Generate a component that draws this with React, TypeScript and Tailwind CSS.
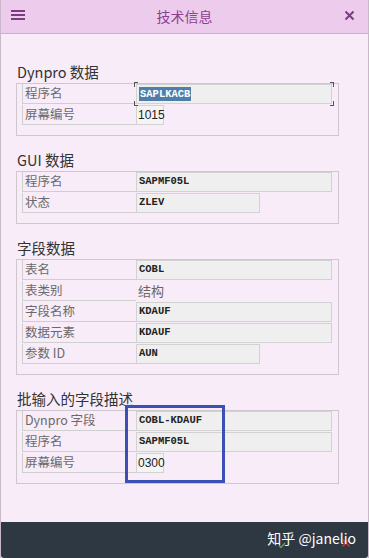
import React from "react";

const cjk = { fontFamily: '"Noto Sans CJK SC", "Noto Sans", sans-serif' };
const mono = { fontFamily: '"Liberation Mono", "DejaVu Sans Mono", monospace' };
const sans = { fontFamily: '"Liberation Sans", Arial, sans-serif' };

type Row = {
  label: string;
  value: string;
  kind: "wide" | "mid" | "small" | "text" | "selected";
};

function Field({ row }: { row: Row }) {
  if (row.kind === "text") {
    return (
      <div className="flex h-full items-center pl-[2px] text-[13px] text-[#666]" style={cjk}>
        {row.value}
      </div>
    );
  }
  if (row.kind === "small") {
    return (
      <div
        className="flex h-full w-[28px] items-center border border-[#d2d2d2] bg-[#f4f4f4] pl-[1px] text-[12px] text-[#222]"
        style={sans}
      >
        {row.value}
      </div>
    );
  }
  const w = row.kind === "mid" ? "w-[124px]" : "w-[196px]";
  return (
    <div
      className={`relative flex h-full ${w} items-center border border-[#d2d2d2] bg-[#efefef] pl-[2px] text-[10.5px] font-bold text-[#222]`}
      style={mono}
    >
      {row.kind === "selected" ? (
        <>
          <span className="bg-[#4d7faa] px-[1px] leading-[14px] text-white">{row.value}</span>
          <span className="absolute -left-[3px] -top-[3px] h-[5px] w-[4px] border-l border-t border-[#555]" />
          <span className="absolute -right-[3px] -top-[3px] h-[5px] w-[4px] border-r border-t border-[#555]" />
          <span className="absolute -bottom-[3px] -left-[3px] h-[5px] w-[4px] border-b border-l border-[#555]" />
          <span className="absolute -bottom-[3px] -right-[3px] h-[5px] w-[4px] border-b border-r border-[#555]" />
        </>
      ) : (
        row.value
      )}
    </div>
  );
}

function Section({ title, rows, first }: { title: string; rows: Row[]; first?: boolean }) {
  return (
    <div className={first ? "" : "mt-[14px]"}>
      <div className="mb-[1px] h-5 pl-[1px] text-[14.5px] leading-5 text-[#333]" style={cjk}>
        {title}
      </div>
      <div className="flex flex-col gap-[1px] border border-[#cfc7cf] pb-[10px] pl-[5px] pr-[6px] pt-0">
        {rows.map((r, i) => (
          <div key={i} className="flex h-5">
            <div
              className="flex w-[114px] shrink-0 items-center border-b border-l border-[#cfcfcf] pl-[2px] text-[12.5px] text-[#6a6a6a]"
              style={cjk}
            >
              {r.label}
            </div>
            <Field row={r} />
          </div>
        ))}
      </div>
    </div>
  );
}

export default function App() {
  return (
    <div className="relative flex h-[558px] w-[369px] flex-col overflow-hidden border-x border-[#c8b8c8] bg-[#f8ecf8]">
      {/* Header */}
      <div className="flex h-[34px] shrink-0 items-center justify-between border-b border-[#cfaed0] bg-[#eccbec] px-[10px]">
        <svg width="14" height="12" viewBox="0 0 14 12" className="mt-[-4px]">
          <rect x="0" y="1" width="14" height="2" fill="#7b3d82" />
          <rect x="0" y="5" width="14" height="2" fill="#7b3d82" />
          <rect x="0" y="9" width="14" height="2" fill="#7b3d82" />
        </svg>
        <div className="text-[14px] text-[#8c418e]" style={cjk}>
          技术信息
        </div>
        <svg width="11" height="11" viewBox="0 0 11 11" className="mr-[3px] mt-[-3px]">
          <path d="M1.5 1.5 L9.5 9.5 M9.5 1.5 L1.5 9.5" stroke="#7b3d82" strokeWidth="2" />
        </svg>
      </div>

      {/* Body */}
      <div className="flex-1 pl-[15px] pr-[29px] pt-[28px]">
        <Section
          first
          title="Dynpro 数据"
          rows={[
            { label: "程序名", value: "SAPLKACB", kind: "selected" },
            { label: "屏幕编号", value: "1015", kind: "small" },
          ]}
        />
        <Section
          title="GUI 数据"
          rows={[
            { label: "程序名", value: "SAPMF05L", kind: "wide" },
            { label: "状态", value: "ZLEV", kind: "mid" },
          ]}
        />
        <Section
          title="字段数据"
          rows={[
            { label: "表名", value: "COBL", kind: "wide" },
            { label: "表类别", value: "结构", kind: "text" },
            { label: "字段名称", value: "KDAUF", kind: "wide" },
            { label: "数据元素", value: "KDAUF", kind: "wide" },
            { label: "参数 ID", value: "AUN", kind: "mid" },
          ]}
        />
        <Section
          title="批输入的字段描述"
          rows={[
            { label: "Dynpro 字段", value: "COBL-KDAUF", kind: "wide" },
            { label: "程序名", value: "SAPMF05L", kind: "wide" },
            { label: "屏幕编号", value: "0300", kind: "small" },
          ]}
        />
      </div>

      {/* Annotation rectangle */}
      <div className="absolute left-[124px] top-[405px] h-[78px] w-[100px] border-[3px] border-[#3b4fb4]" />

      {/* Footer */}
      <div className="relative flex h-[36px] shrink-0 items-center justify-end rounded-b-[3px] bg-[#2e3842] pb-[4px] pr-[12px]">
        <svg width="8" height="7" viewBox="0 0 8 7" className="absolute left-[277px] top-[20px]">
          <path d="M1 3.5 L3 5.5 L7 1" stroke="#5fa55f" strokeWidth="1.3" fill="none" />
        </svg>
        <svg width="10" height="10" viewBox="0 0 10 10" className="absolute left-[340px] top-[16px]">
          <path d="M1.5 1.5 L8.5 8.5 M8.5 1.5 L1.5 8.5" stroke="#c0392b" strokeWidth="1.6" />
        </svg>
        <span className="relative text-[14px] text-white" style={cjk}>
          知乎 @janelio
        </span>
      </div>
    </div>
  );
}
